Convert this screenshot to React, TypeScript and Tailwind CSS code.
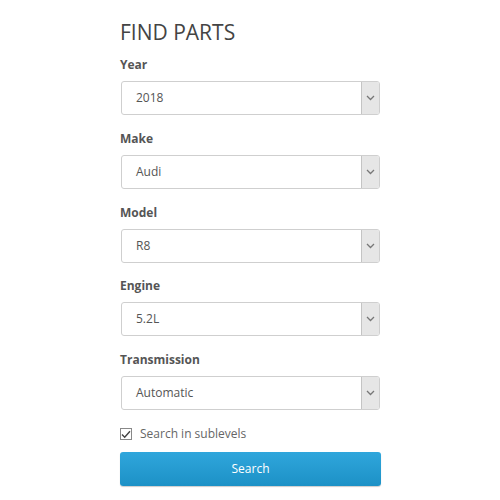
import { useState } from 'react';

const fields = [
  { label: 'Year', value: '2018' },
  { label: 'Make', value: 'Audi' },
  { label: 'Model', value: 'R8' },
  { label: 'Engine', value: '5.2L' },
  { label: 'Transmission', value: 'Automatic' },
];

function SelectBox({ value }: { value: string }) {
  return (
    <div className="flex h-[34px] w-[259px] items-stretch rounded-[3px] border border-[#cfcfcf] bg-white">
      <div className="flex flex-1 items-center pl-[14px] text-[12px] text-[#555]">{value}</div>
      <div className="flex w-[18px] items-center justify-center rounded-r-[2px] border-l border-[#c4c4c4] bg-[#e6e6e6]">
        <svg width="9" height="6" viewBox="0 0 9 6" fill="none">
          <path d="M1 1l3.5 3.5L8 1" stroke="#777" strokeWidth="1.3" />
        </svg>
      </div>
    </div>
  );
}

export default function App() {
  const [checked, setChecked] = useState(true);

  return (
    <div className="min-h-[500px] w-[500px] bg-white" style={{ fontFamily: '"Open Sans", sans-serif' }}>
      <div className="ml-[120px] w-[261px] pt-[18px]">
        <h1 className="text-[21px] leading-[28px] text-[#444]">FIND PARTS</h1>

        {fields.map((f, i) => (
          <div key={f.label} className={i === 0 ? 'mt-[10px]' : 'mt-[14.75px]'}>
            <div className="text-[12px] font-bold leading-[17px] text-[#555]">{f.label}</div>
            <div className="mt-[8px] pl-[1px]">
              <SelectBox value={f.value} />
            </div>
          </div>
        ))}

        <label className="mt-[15px] flex items-center gap-[8px] text-[12px] text-[#666]">
          <span
            onClick={() => setChecked(!checked)}
            className="flex h-[12px] w-[12px] items-center justify-center border border-[#888] bg-white"
          >
            {checked && (
              <svg width="10" height="9" viewBox="0 0 10 9" fill="none">
                <path d="M1 4.5l2.7 2.7L9 1.2" stroke="#444" strokeWidth="1.4" />
              </svg>
            )}
          </span>
          Search in sublevels
        </label>

        <button className="mt-[9px] flex h-[34px] w-[261px] items-center justify-center rounded-[3px] bg-gradient-to-b from-[#2fa6dc] to-[#1c91c6] text-[12px] text-white shadow-[0_1px_1px_rgba(0,0,0,0.2)]">
          Search
        </button>
      </div>
    </div>
  );
}
